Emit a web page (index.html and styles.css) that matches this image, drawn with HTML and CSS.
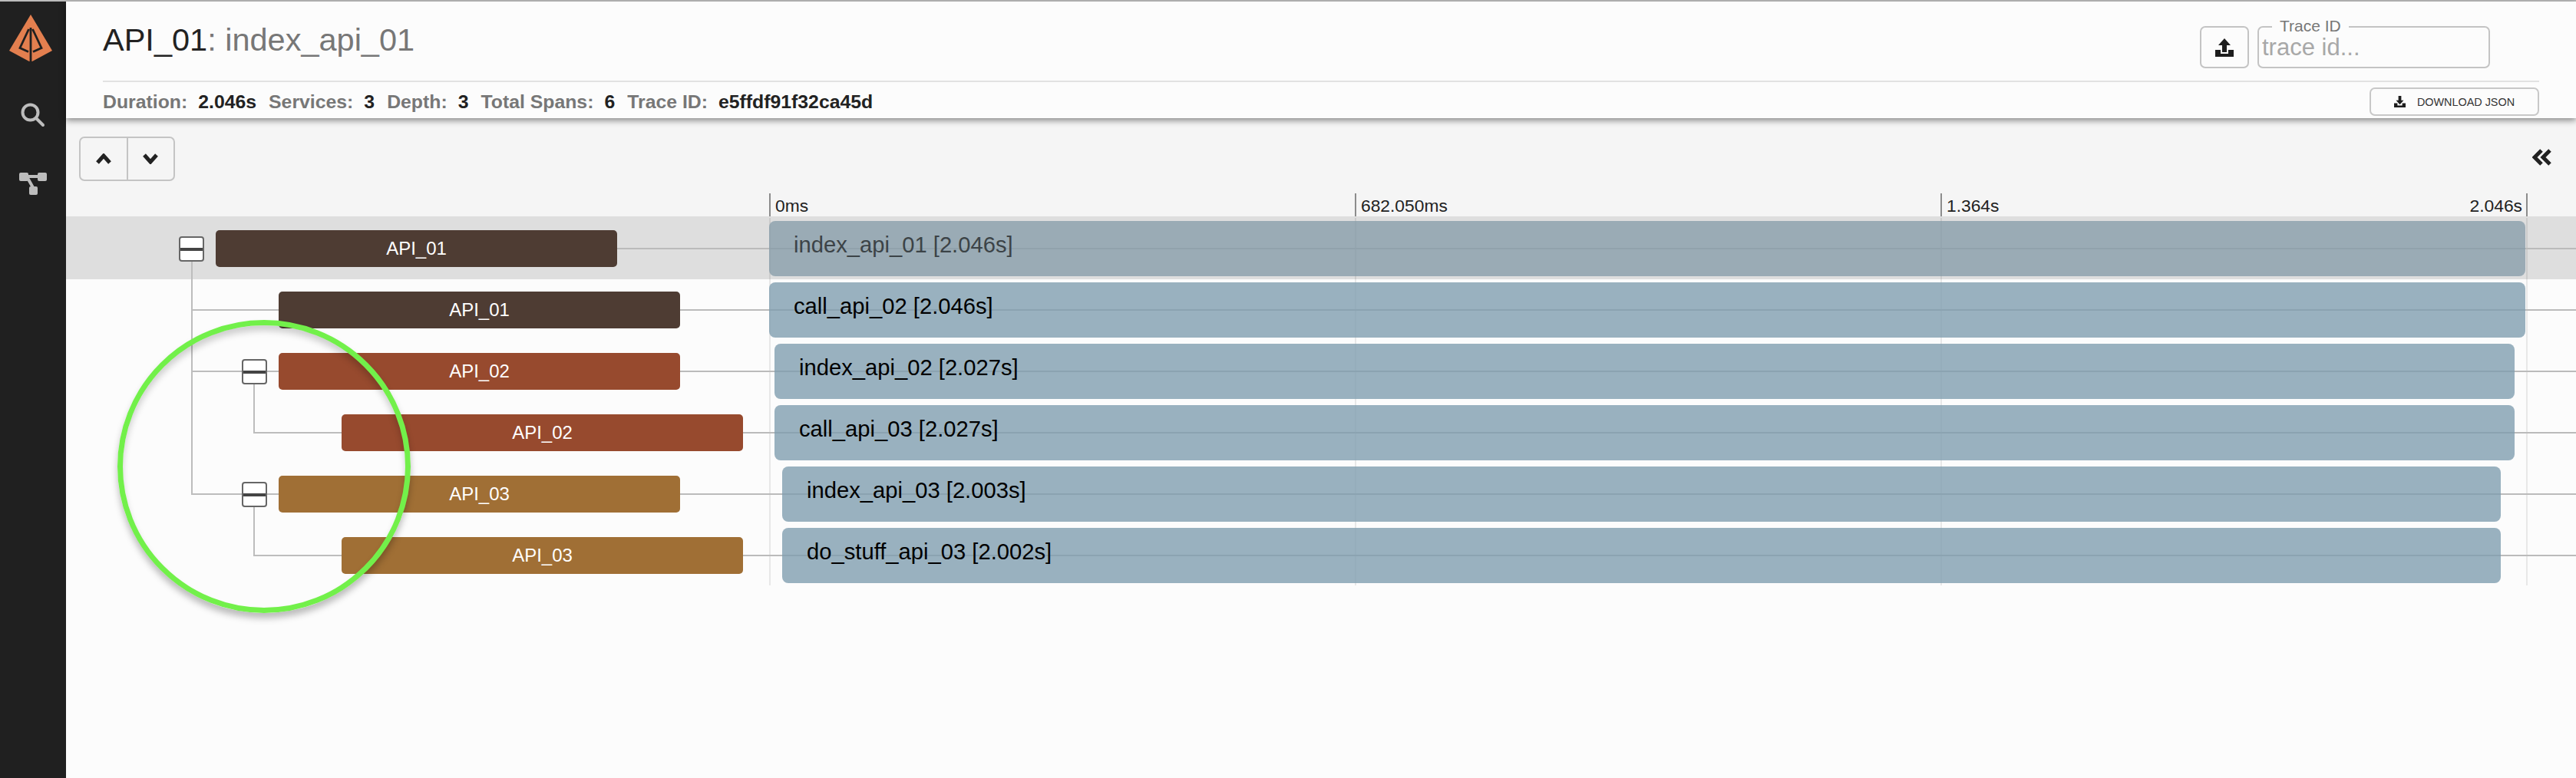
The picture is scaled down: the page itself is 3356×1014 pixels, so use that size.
FILE: index.html
```html
<!DOCTYPE html>
<html lang="en">
<head>
<meta charset="utf-8">
<title>API_01: index_api_01</title>
<link rel="stylesheet" href="styles.css">
</head>
<body>
<div class="app">
  <aside class="sidebar">
    <svg class="logo" viewBox="10 17 60 65" width="60" height="65">
      <path class="logo-fill" d="M40 19 68 66 42 80H38L12 66Z"/>
      <path class="logo-cut" d="M40 36V80M37.5 38 26 62.5 37 67.5M42.5 38 54 62.5 43 67.5"/>
    </svg>
    <svg class="nav-icon nav-search" viewBox="0 0 32 32" width="32" height="32">
      <circle cx="12.5" cy="12.5" r="10"/>
      <path d="M20.5 20.5 29 29"/>
    </svg>
    <svg class="nav-icon nav-graph" viewBox="0 0 38 30" width="38" height="30">
      <path d="M6 6H30M12 8 21 24"/>
      <rect class="node" x="1" y="1" width="12" height="11" rx="2"/>
      <rect class="node" x="25" y="1" width="12" height="11" rx="2"/>
      <rect class="node" x="14" y="19" width="11" height="11" rx="2"/>
    </svg>
  </aside>
  <main class="main">
    <header class="header">
      <div class="title-row">
        <h1 class="title"><span class="svc">API_01</span>: index_api_01</h1>
        <div class="trace-tools">
          <button class="upload-btn" type="button">
            <svg viewBox="0 0 24 24" width="24" height="24"><path d="M12 0 20 9H15V18H9V9H4Z"/><path d="M0 15H7V20H17V15H24V24H0Z"/></svg>
          </button>
          <fieldset class="trace-field">
            <legend>Trace ID</legend>
            <input class="trace-input" type="text" placeholder="trace id...">
          </fieldset>
        </div>
      </div>
      <div class="stats-row">
        <div class="stats">
          <span class="stat">Duration:<b>2.046s</b></span>
          <span class="stat">Services:<b>3</b></span>
          <span class="stat">Depth:<b>3</b></span>
          <span class="stat">Total Spans:<b>6</b></span>
          <span class="stat">Trace ID:<b>e5ffdf91f32ca45d</b></span>
        </div>
        <button class="download-btn" type="button">
          <svg viewBox="0 0 24 24" width="15" height="15"><path d="M9 0H15V9H20L12 18 4 9H9Z"/><path d="M0 15H7V20H17V15H24V24H0Z"/></svg>
          DOWNLOAD JSON
        </button>
      </div>
    </header>
    <section class="toolbar">
      <div class="nav-group">
        <button class="nav-btn" type="button"><svg viewBox="0 0 20 14" width="20" height="14"><path d="M2 12 10 3 18 12"/></svg></button>
        <button class="nav-btn" type="button"><svg viewBox="0 0 20 14" width="20" height="14"><path d="M2 2 10 11 18 2"/></svg></button>
      </div>
      <button class="collapse-btn" type="button"><svg viewBox="0 0 26 22" width="26" height="22"><path d="M12 2 3 11 12 20M23 2 14 11 23 20"/></svg></button>
    </section>
    <section class="ticks">
      <div class="tick-track">
        <span class="tick"><span class="tick-label">0ms</span></span>
        <span class="tick"><span class="tick-label">682.050ms</span></span>
        <span class="tick"><span class="tick-label">1.364s</span></span>
        <span class="tick"><span class="tick-label tick-label-end">2.046s</span></span>
      </div>
    </section>
    <section class="rows">
      <svg class="tree" width="400" height="480">
        <path d="M164 58V362H229M164 122H277M164 202H277M245 218V282H359M245 362H277M245 378V442H359"/>
      </svg>
      <div class="gridlines"><i></i><i></i><i></i><i></i></div>
      <div class="row selected depth-0">
        <div class="name-cell"><button class="toggle" type="button"></button><div class="svc-bar brown">API_01</div></div>
        <div class="span-cell"><div class="span-bar" style="margin-left:0;width:2288px">index_api_01 [2.046s]</div></div>
      </div>
      <div class="row depth-1">
        <div class="name-cell"><span class="toggle-gap"></span><div class="svc-bar brown">API_01</div></div>
        <div class="span-cell"><div class="span-bar" style="margin-left:0;width:2288px">call_api_02 [2.046s]</div></div>
      </div>
      <div class="row depth-1">
        <div class="name-cell"><button class="toggle" type="button"></button><div class="svc-bar rust">API_02</div></div>
        <div class="span-cell"><div class="span-bar" style="margin-left:7px;width:2267px">index_api_02 [2.027s]</div></div>
      </div>
      <div class="row depth-2">
        <div class="name-cell"><span class="toggle-gap"></span><div class="svc-bar rust">API_02</div></div>
        <div class="span-cell"><div class="span-bar" style="margin-left:7px;width:2267px">call_api_03 [2.027s]</div></div>
      </div>
      <div class="row depth-1">
        <div class="name-cell"><button class="toggle" type="button"></button><div class="svc-bar ochre">API_03</div></div>
        <div class="span-cell"><div class="span-bar" style="margin-left:17px;width:2239px">index_api_03 [2.003s]</div></div>
      </div>
      <div class="row depth-2">
        <div class="name-cell"><span class="toggle-gap"></span><div class="svc-bar ochre">API_03</div></div>
        <div class="span-cell"><div class="span-bar" style="margin-left:17px;width:2239px">do_stuff_api_03 [2.002s]</div></div>
      </div>
    </section>
  </main>
</div>
<div class="highlight-ring"></div>
</body>
</html>
```
FILE: styles.css
```css
* { box-sizing: border-box; }
html, body { margin: 0; height: 100%; }
body { background: #fcfcfc; font-family: "Liberation Sans", Arial, sans-serif; color: #222; overflow: hidden; }
button { font-family: inherit; cursor: pointer; }

.app { display: flex; height: 1014px; border-top: 2px solid #bbb; }

.sidebar { width: 86px; flex: none; background: #202020; display: flex; flex-direction: column; align-items: center; padding-top: 15px; }
.logo { display: block; margin-left: -6px; }
.logo-fill { fill: #e37f4f; }
.logo-cut { fill: none; stroke: #202020; stroke-width: 2.8; }
.nav-icon { display: block; fill: none; stroke: #bdbdbd; stroke-width: 4; stroke-linecap: round; }
.nav-search { margin-top: 52px; }
.nav-graph { margin-top: 58px; }
.node { fill: #bdbdbd; stroke: none; }

.main { flex: 1; min-width: 0; display: flex; flex-direction: column; }

.header { height: 152px; flex: none; background: #fcfcfc; padding: 0 48px; box-shadow: 0 3px 8px rgba(0, 0, 0, .45); position: relative; z-index: 2; display: flex; flex-direction: column; }
.title-row { height: 105px; flex: none; display: flex; justify-content: space-between; border-bottom: 2px solid #e2e2e2; }
.title { margin: 25px 0 0; font-size: 41.5px; line-height: 50px; font-weight: 400; color: #777; }
.svc { color: #222; }
.trace-tools { display: flex; gap: 11px; margin-right: 64px; align-items: flex-start; padding-top: 32px; }
.upload-btn { width: 64px; height: 55px; background: #fcfcfc; border: 2px solid #c4c4c4; border-radius: 7px; padding: 0; display: flex; align-items: center; justify-content: center; }
.upload-btn svg { fill: #1d1d1d; }
.trace-field { position: relative; width: 303px; height: 55px; border: 2px solid #c4c4c4; border-radius: 7px; margin: 0; padding: 0 4px; background: #fcfcfc; }
.trace-field legend { position: absolute; top: -15px; left: 17px; padding: 0 10px; background: #fcfcfc; font-size: 21px; line-height: 26px; color: #777; }
.trace-input { width: 100%; height: 51px; border: 0; outline: 0; background: none; padding: 0; font-family: inherit; font-size: 31px; }
.trace-input::placeholder { color: #a8a8a8; opacity: 1; }

.stats-row { flex: 1; display: flex; justify-content: space-between; align-items: flex-start; }
.stats { display: flex; gap: 16px; font-size: 24.8px; font-weight: 700; line-height: 30px; color: #777; padding-top: 11px; }
.stat b { color: #222; margin-left: 14px; }
.download-btn { margin-top: 7px; width: 221px; height: 37px; border: 2px solid #c8c8c8; border-radius: 7px; background: #fcfcfc; display: flex; align-items: center; justify-content: center; gap: 15px; font-size: 14.4px; color: #333; padding: 0; }
.download-btn svg { fill: #1d1d1d; }

.toolbar { height: 88px; flex: none; background: #f5f5f5; display: flex; justify-content: space-between; align-items: flex-start; padding: 24px 31px 0 17px; }
.nav-group { display: flex; width: 125px; height: 58px; border: 2px solid #c4c4c4; border-radius: 7px; }
.nav-btn { flex: 1; background: none; border: 0; padding: 0; display: flex; align-items: center; justify-content: center; }
.nav-btn + .nav-btn { border-left: 2px solid #c4c4c4; }
.nav-btn svg, .collapse-btn svg { fill: none; stroke: #222; stroke-width: 5; }
.collapse-btn { background: none; border: 0; padding: 0; margin-top: 16px; display: flex; }

.ticks { height: 40px; flex: none; background: #f5f5f5; padding: 10px 0 0 916px; }
.tick-track { width: 2291px; height: 30px; display: flex; justify-content: space-between; }
.tick { width: 2px; height: 30px; background: #8c8c8c; position: relative; }
.tick-label { position: absolute; left: 8px; top: 2px; font-size: 22.8px; line-height: 28px; color: #222; white-space: nowrap; }
.tick-label-end { left: auto; right: 7px; }

.rows { position: relative; }
.tree { position: absolute; left: 0; top: 0; z-index: 1; fill: none; stroke: #bdbdbd; stroke-width: 2; pointer-events: none; }
.gridlines { position: absolute; left: 916px; top: 2px; width: 2291px; height: 479px; display: flex; justify-content: space-between; z-index: 1; }
.gridlines i { width: 2px; background: rgba(0, 0, 0, .08); }

.row { height: 80px; display: flex; align-items: center; position: relative; }
.row::before { content: ""; position: absolute; right: 0; top: 39px; height: 2px; background: #bbb; z-index: 1; }
.row.depth-0::before { left: 200px; }
.row.depth-1::before { left: 280px; }
.row.depth-2::before { left: 360px; }
.row.selected { height: 82px; background: #dedede; padding-top: 2px; }
.row.selected::before { top: 41px; }

.name-cell { width: 916px; flex: none; display: flex; align-items: center; gap: 15px; position: relative; z-index: 2; }
.depth-0 .name-cell { padding-left: 147px; }
.depth-1 .name-cell { padding-left: 229px; }
.depth-2 .name-cell { padding-left: 311px; }
.toggle { width: 33px; height: 33px; flex: none; padding: 0; border: 2px solid #666; border-radius: 4px; background: linear-gradient(#fff, #fff 13px, #444 13px, #444 17px, #fff 17px); }
.toggle-gap { width: 33px; height: 33px; flex: none; }
.svc-bar { width: 523px; height: 48px; border-radius: 5px; color: #fff; font-size: 24px; line-height: 48px; text-align: center; flex: none; }
.brown { background: #4e3c33; }
.rust { background: #974a2e; }
.ochre { background: #a06f35; }

.span-cell { flex: 1; min-width: 0; position: relative; z-index: 2; }
.span-bar { height: 72px; border-radius: 8px; background: rgba(128, 157, 175, .8); color: #000; font-size: 29.2px; line-height: 63px; padding-left: 32px; white-space: nowrap; }
.selected .span-bar { background: rgba(131, 154, 167, .75); color: #3c4347; }

.highlight-ring { position: absolute; left: 153px; top: 417px; width: 382px; height: 382px; border: 7px solid #72f04a; border-radius: 50%; box-shadow: 0 7px 9px rgba(0, 0, 0, .25), inset 0 7px 9px rgba(0, 0, 0, .18); z-index: 5; pointer-events: none; }
```
